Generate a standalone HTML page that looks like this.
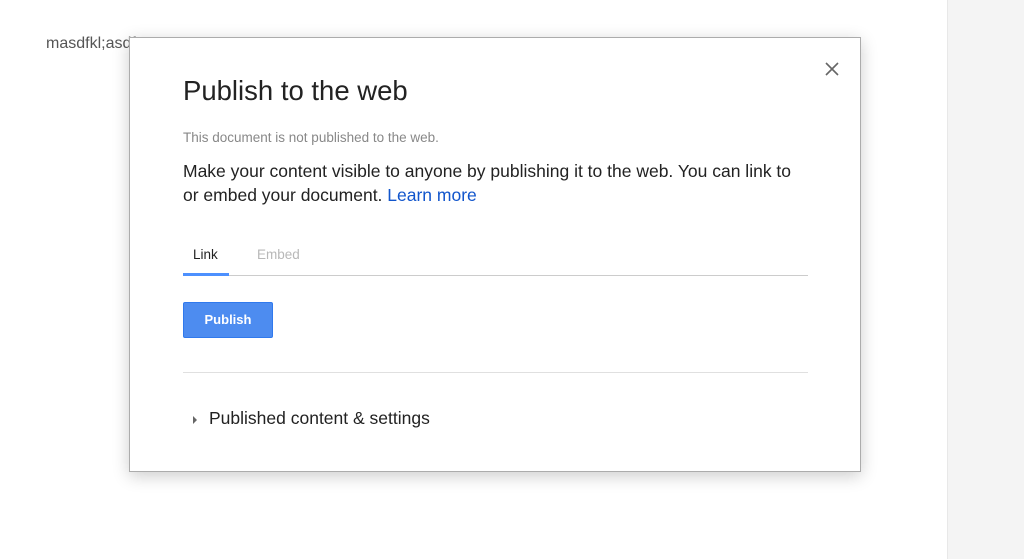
<!DOCTYPE html>
<html><head><style>
body{margin:0;width:1024px;height:559px;background:#fff;font-family:"Liberation Sans",Arial,sans-serif;position:relative;overflow:hidden}
.side{position:absolute;left:947px;top:0;width:77px;height:559px;background:#f4f4f4;border-left:1px solid #e8e8e8}
.bg{position:absolute;left:46px;top:35px;font-size:16px;color:#555}
.dlg{position:absolute;left:129px;top:37px;width:730px;height:433px;background:#fff;border:1px solid #acacac;box-shadow:0 4px 16px rgba(0,0,0,.2)}
.t{position:absolute;left:53px;top:37px;font-size:27.5px;color:#222}
.s{position:absolute;left:53px;top:92px;font-size:13.5px;color:#888}
.p{position:absolute;left:53px;top:121px;width:625px;font-size:17.5px;line-height:24px;color:#222}
.p a{color:#1155cc;text-decoration:none}
.tabs{position:absolute;left:53px;top:237px;width:625px;border-bottom:1px solid #ccc;height:0}
.tl{position:absolute;left:63px;top:209px;font-size:13.5px;color:#222}
.te{position:absolute;left:127px;top:209px;font-size:13.5px;color:#b8b8b8}
.ul{position:absolute;left:53px;top:235px;width:46px;height:3px;background:#4d90fe}
.btn{position:absolute;left:53px;top:264px;width:88px;height:34px;background:#4d8cf0;border:1px solid #3079ed;border-radius:2px;color:#fff;font-weight:bold;font-size:13px;line-height:34px;text-align:center}
.hr{position:absolute;left:53px;top:334px;width:625px;border-top:1px solid #e0e0e0}
.arr{position:absolute;left:63px;top:378px;width:0;height:0;border-left:4px solid #666;border-top:4px solid transparent;border-bottom:4px solid transparent}
.ps{position:absolute;left:79px;top:370px;font-size:17.5px;color:#222}
.x{position:absolute;left:694px;top:23px}
</style></head><body>
<div class="side"></div>
<div class="bg">masdfkl;asdf</div>
<div class="dlg">
<div class="t">Publish to the web</div>
<div class="s">This document is not published to the web.</div>
<div class="p">Make your content visible to anyone by publishing it to the web. You can link to or embed your document. <a>Learn more</a></div>
<div class="tabs"></div>
<div class="tl">Link</div><div class="te">Embed</div>
<div class="ul"></div>
<div class="btn">Publish</div>
<div class="hr"></div>
<div class="arr"></div>
<div class="ps">Published content &amp; settings</div>
<svg class="x" width="16" height="16" viewBox="0 0 16 16"><path d="M2 2L14 14M14 2L2 14" stroke="#666" stroke-width="1.6"/></svg>
</div>
</body></html>
